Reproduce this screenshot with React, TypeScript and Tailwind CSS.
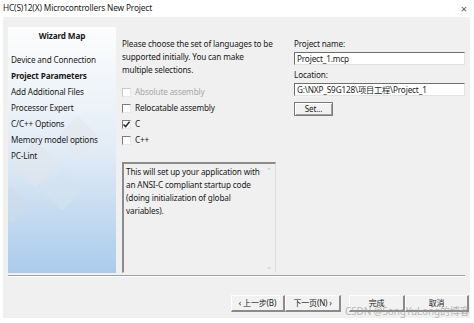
import React from "react";

const font = {
  fontFamily: '"Noto Sans", "Noto Sans CJK SC", sans-serif',
};

const steps = [
  { label: "Device and Connection" },
  { label: "Project Parameters", active: true },
  { label: "Add Additional Files" },
  { label: "Processor Expert" },
  { label: "C/C++ Options" },
  { label: "Memory model options" },
  { label: "PC-Lint" },
];

const langs = [
  { label: "Absolute assembly", disabled: true },
  { label: "Relocatable assembly" },
  { label: "C", checked: true },
  { label: "C++" },
];

function CheckBox({ checked, disabled }: { checked?: boolean; disabled?: boolean }) {
  return (
    <span
      className={`relative inline-block w-[9px] h-[9px] bg-white border-t border-l ${
        disabled ? "border-[#c8c8c8]" : "border-[#7a7a7a]"
      } border-r border-b border-r-[#e8e8e8] border-b-[#e8e8e8]`}
    >
      {checked && (
        <svg viewBox="0 0 9 9" className="absolute -left-px -top-px w-[9px] h-[9px]">
          <path d="M1.5 4.5 L3.6 6.6 L7.5 1.8" stroke="#222" strokeWidth="1.4" fill="none" />
        </svg>
      )}
    </span>
  );
}

function Btn({ children, w }: { children: React.ReactNode; w: string }) {
  return (
    <div
      className={`${w} h-[17px] flex items-center justify-center text-[8px] text-[#222] bg-[#f2f2f2] border-t border-l border-white border-r-2 border-b-2 border-r-[#8a8a8a] border-b-[#8a8a8a]`}
    >
      {children}
    </div>
  );
}

export default function App() {
  return (
    <div
      className="w-[474px] h-[323px] bg-white text-[#1a1a1a] overflow-hidden relative tracking-[-0.15px]"
      style={font}
    >
      {/* title bar */}
      <div className="h-[17px] flex items-center justify-between px-[3px] text-[8.3px] text-[#222]">
        <span>HC(S)12(X) Microcontrollers New Project</span>
        <span className="text-[11px] text-[#555] mr-[4px] leading-none">×</span>
      </div>

      {/* dialog body */}
      <div className="mx-[3px] w-[467px] h-[301px] bg-[#f0f0f0] flex flex-col">
        <div className="flex pt-[10px] pl-[5px] h-[256px]">
          {/* wizard map */}
          <div className="relative w-[108px] h-[246px] overflow-hidden bg-gradient-to-b from-[#fdfdfd] via-[#e2ecf6] to-[#abcbeb]">
            <div className="absolute left-[10px] top-[120px] w-[34px] h-[34px] rotate-45 bg-[#dfe5ec]/70" />
            <div className="absolute left-[55px] top-[95px] w-[30px] h-[30px] rotate-45 bg-[#e4e8ee]/70" />
            <div className="absolute left-[40px] top-[150px] w-[28px] h-[28px] rotate-45 bg-[#d5e2ee]/60" />
            <div className="absolute left-[-10px] top-[165px] w-[26px] h-[26px] rotate-45 bg-[#cddcea]/60" />
            <div className="relative">
              <div className="text-center font-bold text-[8.2px] pt-[2px] leading-[13px]">Wizard Map</div>
              <div className="mt-[10px] pl-[3px] flex flex-col">
                {steps.map((s) => (
                  <div
                    key={s.label}
                    className={`h-[16px] leading-[16px] text-[8.2px] ${s.active ? "font-bold" : ""}`}
                  >
                    {s.label}
                  </div>
                ))}
              </div>
            </div>
          </div>

          {/* languages */}
          <div className="w-[154px] ml-[6px] pt-[10px] flex flex-col">
            <p className="text-[8.2px] leading-[13px]">
              Please choose the set of languages to be supported initially. You can make multiple selections.
            </p>
            <div className="mt-[8px] flex flex-col">
              {langs.map((l) => (
                <div key={l.label} className="h-[16px] flex items-center gap-[4px]">
                  <CheckBox checked={l.checked} disabled={l.disabled} />
                  <span className={`text-[8.2px] ${l.disabled ? "text-[#a8a8a8]" : ""}`}>{l.label}</span>
                </div>
              ))}
            </div>
            <div className="mt-[14px] h-[111px] relative border-t-2 border-l-2 border-[#8c8c8c] border-r border-b border-r-[#dcdcdc] border-b-[#f0f0f0] pl-[2px] pt-[1px] pr-[10px]">
              <p className="text-[8.2px] leading-[13px]">
                This will set up your application with an ANSI-C compliant startup code (doing initialization of global
                variables).
              </p>
              <span className="absolute right-[3px] top-[3px] text-[7px] text-[#b8b8b8] leading-none">⌃</span>
              <span className="absolute right-[3px] bottom-[2px] text-[7px] text-[#b8b8b8] leading-none">⌄</span>
            </div>
          </div>

          {/* project */}
          <div className="w-[171px] ml-[18px] pt-[10px] flex flex-col">
            <div className="text-[8.2px] leading-[13px]">Project name:</div>
            <div className="mt-[2px] h-[13px] bg-white border-t border-l border-[#6e6e6e] border-r border-b border-r-[#e3e3e3] border-b-[#e3e3e3] text-[8.2px] leading-[11px] pl-[2px]">
              Project_1.mcp
            </div>
            <div className="mt-[3px] text-[8.2px] leading-[13px]">Location:</div>
            <div className="mt-[2px] h-[13px] bg-white border-t border-l border-[#6e6e6e] border-r border-b border-r-[#e3e3e3] border-b-[#e3e3e3] text-[8.2px] leading-[11px] pl-[2px]">
              G:\NXP_S9G128\项目工程\Project_1
            </div>
            <div className="mt-[6px] w-[39px] h-[14px] flex items-center justify-center text-[8px] bg-[#f2f2f2] border border-[#7a7a7a] shadow-[inset_1px_1px_0_#fff,inset_-1px_-1px_0_#a0a0a0]">
              Set...
            </div>
          </div>
        </div>

        {/* separator */}
        <div className="mx-[5px] w-[457px] h-[2px] border-t border-[#a0a0a0] border-b border-b-white mt-[2px]" />

        {/* buttons */}
        <div className="flex justify-end pr-[1px] mt-[18px]">
          <div className="flex">
            <Btn w="w-[54px]">‹ 上一步(B)</Btn>
            <Btn w="w-[56px]">下一页(N) ›</Btn>
          </div>
          <div className="flex ml-[8px]">
            <Btn w="w-[56px]">完成</Btn>
            <Btn w="w-[64px]">取消</Btn>
          </div>
        </div>
      </div>

      {/* watermark */}
      <div className="absolute left-[345px] top-[306px] text-[10px] text-[#9a9a9a]/70 leading-none">
        CSDN @SongYuLong的博客
      </div>
    </div>
  );
}
